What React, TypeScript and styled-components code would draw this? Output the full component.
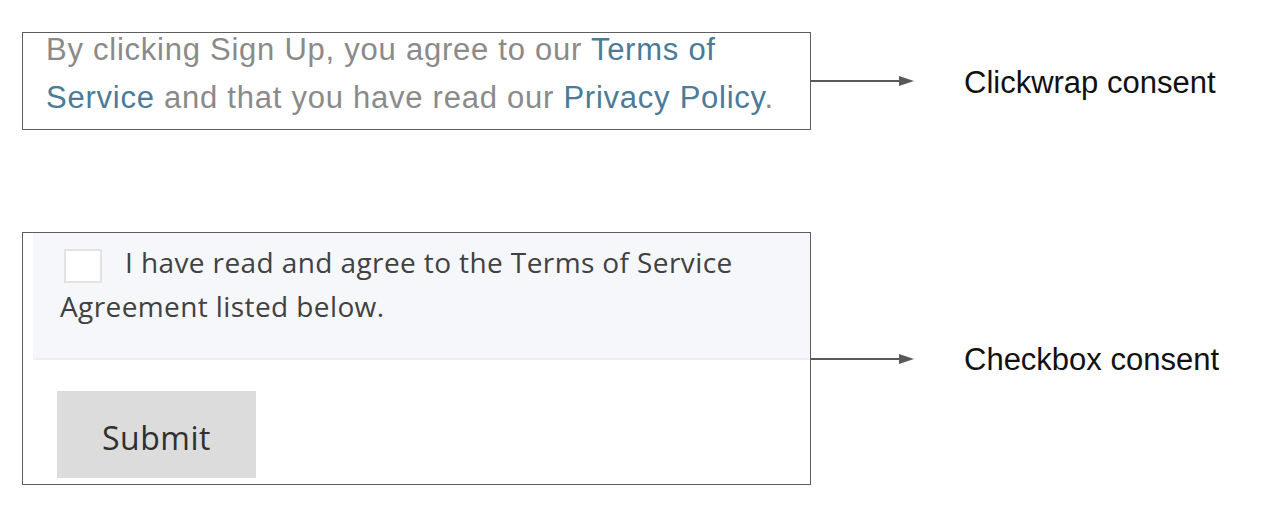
import React from 'react';
import styled, { createGlobalStyle } from 'styled-components';

// Page-wide reset: no body margin, plain white page.
const GlobalStyle = createGlobalStyle`
  html, body {
    margin: 0;
    padding: 0;
    background: #ffffff;
  }
`;

// The figure: two example rows stacked one above the other.
const Figure = styled.div`
  display: flex;
  flex-direction: column;
  gap: 102px;
  padding: 32px 0 0 22px;
`;

// One row: the screenshot box, an arrow and its caption.
const Row = styled.div`
  display: flex;
  align-items: center;
`;

// Framed snippet of a sign-up form.
const Frame = styled.div<{ $height: number }>`
  box-sizing: border-box;
  width: 789px;
  height: ${(p) => p.$height}px;
  border: 1.5px solid #5e5e5e;
  background: #ffffff;
  overflow: hidden;
  flex: none;
`;

// Clickwrap text, rendered in a grey Arial-like face.
const ClickwrapText = styled.p`
  margin: -7px 0 0 23px;
  font-family: 'Liberation Sans', Arial, sans-serif;
  font-size: 31px;
  line-height: 48px;
  color: #8a8a8a;
  letter-spacing: 0.75px;
  white-space: nowrap;
`;

const Link = styled.span`
  color: #4b7b98;
`;

// Light blue-grey panel holding the checkbox and its text.
const CheckPanel = styled.div`
  box-sizing: border-box;
  margin-left: 10px;
  height: 127px;
  padding: 7px 0 0 27px;
  background: #f5f7fb;
  border-bottom: 2px solid #eceef3;
`;

const CheckText = styled.p`
  margin: 0;
  font-family: 'Open Sans', 'Noto Sans', sans-serif;
  font-size: 28px;
  line-height: 44px;
  letter-spacing: 0.4px;
  color: #414141;
  white-space: nowrap;
`;

const CheckBox = styled.span`
  box-sizing: border-box;
  display: inline-block;
  width: 38px;
  height: 34px;
  margin: 0 23px 0 4px;
  vertical-align: -10px;
  border: 2px solid #e3e3e3;
  background: #ffffff;
`;

const SubmitButton = styled.button`
  display: flex;
  align-items: center;
  justify-content: center;
  box-sizing: border-box;
  width: 199px;
  height: 87px;
  margin: 31px 0 0 34px;
  padding-top: 6px;
  border: none;
  background: #dcdcdc;
  font-family: 'Open Sans', 'Noto Sans', sans-serif;
  font-size: 32px;
  font-weight: 500;
  letter-spacing: 0.5px;
  color: #303030;
`;

// Arrow from the frame to its caption.
const Connector = styled.svg`
  flex: none;
  display: block;
`;

const Caption = styled.span`
  margin-left: 50px;
  padding-top: 3px;
  font-family: 'Liberation Sans', Arial, sans-serif;
  font-size: 31px;
  color: #111111;
  white-space: nowrap;
`;

const Arrow: React.FC = () => (
  <Connector width="103" height="12" viewBox="0 0 103 12">
    <line x1="0" y1="6" x2="90" y2="6" stroke="#595959" strokeWidth="1.8" />
    <polygon points="88,1 103,6 88,11" fill="#595959" />
  </Connector>
);

const App: React.FC = () => (
  <>
    <GlobalStyle />
    <Figure>
      <Row>
        <Frame $height={98}>
          <ClickwrapText>
            By clicking Sign Up, you agree to our <Link>Terms of</Link>
            <br />
            <Link>Service</Link> and that you have read our <Link>Privacy Policy</Link>.
          </ClickwrapText>
        </Frame>
        <Arrow />
        <Caption>Clickwrap consent</Caption>
      </Row>
      <Row>
        <Frame $height={253}>
          <CheckPanel>
            <CheckText>
              <CheckBox />I have read and agree to the Terms of Service
              <br />
              Agreement listed below.
            </CheckText>
          </CheckPanel>
          <SubmitButton>Submit</SubmitButton>
        </Frame>
        <Arrow />
        <Caption>Checkbox consent</Caption>
      </Row>
    </Figure>
  </>
);

export default App;
